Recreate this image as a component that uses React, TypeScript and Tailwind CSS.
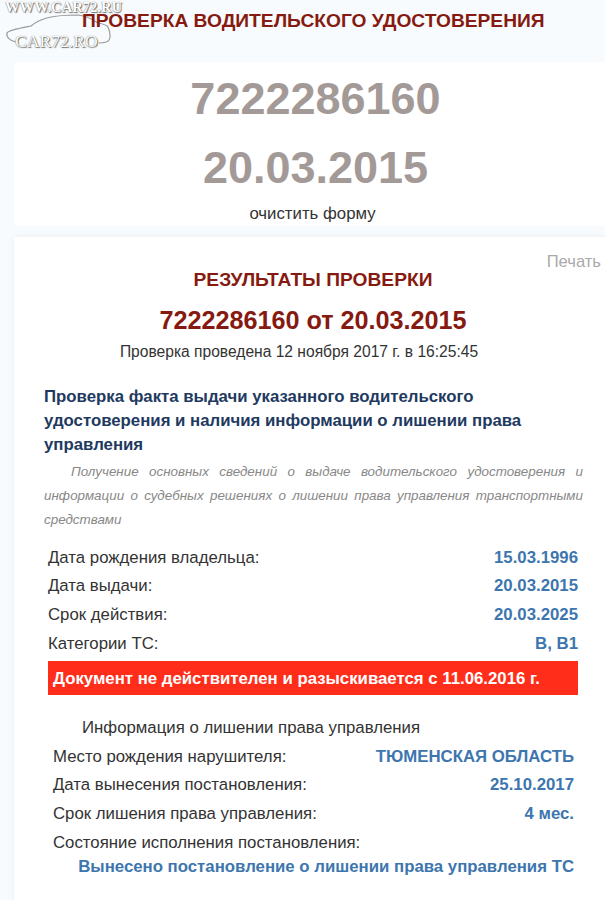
function Row({ label, value }: { label: string; value: string }) {
  return (
    <div className="flex justify-between h-[28.7px] items-center">
      <span className="text-[#333]">{label}</span>
      <span className="font-bold text-[#3d76ae]">{value}</span>
    </div>
  );
}

function Logo() {
  return (
    <div className="absolute left-0 top-0 w-[130px] h-[52px] text-white font-['Liberation_Serif',serif] [text-shadow:0_0_1px_#555,1px_1px_1px_#777]">
      <div className="absolute left-[5px] top-0 text-[14.6px] leading-[15px] font-bold whitespace-nowrap">WWW.CAR72.RU</div>
      <svg className="absolute left-0 top-0" width="130" height="52" viewBox="0 0 130 52" fill="none">
        <path d="M16 42C10 41 6 37 7 33C8 30 20 28 31 26C41 18 52 15 78 15C88 16 93 20 98 23C103 24 107 25 108 27C110 32 111 37 109 40C107 43 102 43 99 43" stroke="#9a9a9a" strokeWidth="1.2" />
      </svg>
      <div className="absolute left-[15px] top-[32px] text-[17.6px] leading-[18px] whitespace-nowrap">CAR72.RO</div>
    </div>
  );
}

export default function App() {
  return (
    <div className="relative w-[605px] h-[900px] overflow-hidden bg-[#f8fbfd] font-['Liberation_Sans',Arial,sans-serif]">
      <Logo />
      <h1 className="relative pl-[82px] h-[62px] pt-[8px] text-[19.2px] leading-[26px] font-bold text-[#861a10] whitespace-nowrap">
        ПРОВЕРКА ВОДИТЕЛЬСКОГО УДОСТОВЕРЕНИЯ
      </h1>
      <div className="ml-[14px] h-[164px] bg-white text-center rounded-l-[3px]">
        <div className="pl-[12px] pt-[2px] text-[45px] leading-[70px] font-bold text-[#a39a98]">7222286160</div>
        <div className="pl-[12px] pt-[1px] text-[45px] leading-[66px] font-bold text-[#a39a98]">20.03.2015</div>
        <div className="pl-[6px] pt-[1px] text-[16.8px] leading-[24px] text-[#333]">очистить форму</div>
      </div>
      <div className="relative ml-[14px] mt-[11px] h-[680px] bg-white pt-[14px] shadow-[0_0_6px_rgba(0,0,0,0.06)]">
        <span className="absolute right-[4px] top-[13px] text-[16.6px] text-[#aaa]">Печать</span>
        <div className="mt-[17px] pl-[7px] text-center text-[19.2px] leading-[24px] font-bold text-[#861a10]">РЕЗУЛЬТАТЫ ПРОВЕРКИ</div>
        <div className="mt-[13px] pl-[7px] text-center text-[25.2px] leading-[30px] font-bold text-[#861a10]">7222286160 от 20.03.2015</div>
        <div className="mt-[5px] pr-[21px] text-center text-[15.6px] leading-[24px] text-[#333]">Проверка проведена 12 ноября 2017 г. в 16:25:45</div>

        <h2 className="ml-[30px] mt-[21px] w-[520px] text-[16.8px] leading-[24px] font-bold text-[#1f3a5f]">
          Проверка факта выдачи указанного водительского удостоверения и наличия информации о лишении права управления
        </h2>
        <p className="ml-[30px] mr-[22px] mt-[3px] text-[13.4px] leading-[24px] italic text-[#888] text-justify indent-[27px]">
          Получение основных сведений о выдаче водительского удостоверения и информации о судебных решениях о лишении права управления транспортными средствами
        </p>

        <div className="ml-[34px] mr-[27px] mt-[11px] text-[16.8px]">
          <Row label="Дата рождения владельца:" value="15.03.1996" />
          <Row label="Дата выдачи:" value="20.03.2015" />
          <Row label="Срок действия:" value="20.03.2025" />
          <Row label="Категории ТС:" value="B, B1" />
        </div>
        <div className="ml-[34px] mr-[27px] mt-[3px] h-[34px] bg-[#ff2d1a] pl-[5px] pt-[1px] flex items-center text-[16.8px] font-bold text-white">
          Документ не действителен и разыскивается с 11.06.2016 г.
        </div>

        <div className="ml-[68px] mt-[21px] text-[16.8px] leading-[24px] text-[#333]">Информация о лишении права управления</div>
        <div className="ml-[39px] mr-[31px] mt-[2px] text-[16.8px]">
          <Row label="Место рождения нарушителя:" value="ТЮМЕНСКАЯ ОБЛАСТЬ" />
          <Row label="Дата вынесения постановления:" value="25.10.2017" />
          <Row label="Срок лишения права управления:" value="4 мес." />
          <Row label="Состояние исполнения постановления:" value="" />
          <div className="text-right font-bold text-[#3d76ae] leading-[20px]">Вынесено постановление о лишении права управления ТС</div>
        </div>
      </div>
    </div>
  );
}
